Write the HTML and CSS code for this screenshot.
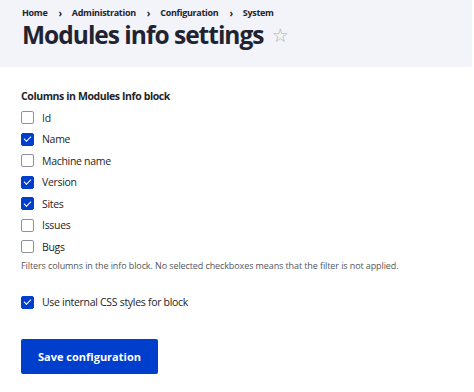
FILE: index.html
```html
<!DOCTYPE html>
<html>
<head>
<meta charset="utf-8">
<link rel="stylesheet" href="styles.css">
</head>
<body>
<header class="page-header">
  <nav class="breadcrumb">
    <a>Home</a><span class="sep">›</span><a>Administration</a><span class="sep">›</span><a>Configuration</a><span class="sep">›</span><a>System</a>
  </nav>
  <h1 class="title">Modules info settings <span class="star">☆</span></h1>
</header>
<main class="content">
  <fieldset class="group">
    <legend class="group-label">Columns in Modules Info block</legend>
    <div class="items">
      <label class="item"><span class="box"></span>Id</label>
      <label class="item"><span class="box checked"></span>Name</label>
      <label class="item"><span class="box"></span>Machine name</label>
      <label class="item"><span class="box checked"></span>Version</label>
      <label class="item"><span class="box checked"></span>Sites</label>
      <label class="item"><span class="box"></span>Issues</label>
      <label class="item"><span class="box"></span>Bugs</label>
    </div>
    <p class="desc">Filters columns in the info block. No selected checkboxes means that the filter is not applied.</p>
  </fieldset>
  <label class="item single"><span class="box checked"></span>Use internal CSS styles for block</label>
  <button class="save">Save configuration</button>
</main>
</body>
</html>
```
FILE: styles.css
```css
* { box-sizing: border-box; }
body {
  margin: 0;
  background: #fff;
  font-family: "Open Sans", "DejaVu Sans", sans-serif;
  color: #232429;
}
.page-header {
  background: #f3f4f9;
  height: 67px;
  padding: 6px 22px 0;
  margin-right: 2px;
}
.breadcrumb {
  display: flex;
  align-items: center;
  height: 13px;
  font-size: 9px;
  font-weight: 700;
  letter-spacing: -0.3px;
  line-height: 13px;
  color: #222330;
}
.breadcrumb .sep {
  margin: 0 10px 0 11px;
  font-size: 10px;
  line-height: 10px;
}
.title {
  margin: 0;
  font-size: 24.5px;
  line-height: 32px;
  font-weight: 700;
  letter-spacing: -1px;
  color: #222330;
}
.star {
  font-weight: 400;
  font-size: 19px;
  letter-spacing: 0;
  margin-left: 3px;
  color: #a9acb5;
  vertical-align: 2px;
}
.content {
  padding: 22px 21px;
}
.group {
  border: 0;
  margin: 0;
  padding: 0;
}
.group-label {
  padding: 0;
  font-size: 10.5px;
  font-weight: 700;
  letter-spacing: -0.4px;
  line-height: 14px;
  margin-bottom: 4px;
}
.items {
  display: flex;
  flex-direction: column;
}
.item {
  display: flex;
  align-items: center;
  gap: 8px;
  height: 21.5px;
  font-size: 10.5px;
  letter-spacing: -0.3px;
}
.box {
  flex: none;
  width: 13px;
  height: 13px;
  border: 1px solid #8e929c;
  border-radius: 2px;
  background: #fff;
  display: inline-flex;
  align-items: center;
  justify-content: center;
}
.box.checked {
  background: #003ecc;
  border-color: #003ecc;
}
.box.checked::after {
  content: "";
  width: 6px;
  height: 3px;
  border-left: 1.6px solid #fff;
  border-bottom: 1.6px solid #fff;
  transform: translateY(-1px) rotate(-45deg);
}
.desc {
  margin: 1px 0 0;
  font-size: 9px;
  letter-spacing: -0.1px;
  line-height: 13px;
  color: #55565b;
}
.single {
  margin-top: 20px;
}
.save {
  display: block;
  margin-top: 26px;
  width: 137px;
  height: 35px;
  border: 0;
  border-radius: 2px;
  background: #003ecc;
  color: #fff;
  font-family: inherit;
  font-size: 11px;
  font-weight: 700;
}
```
